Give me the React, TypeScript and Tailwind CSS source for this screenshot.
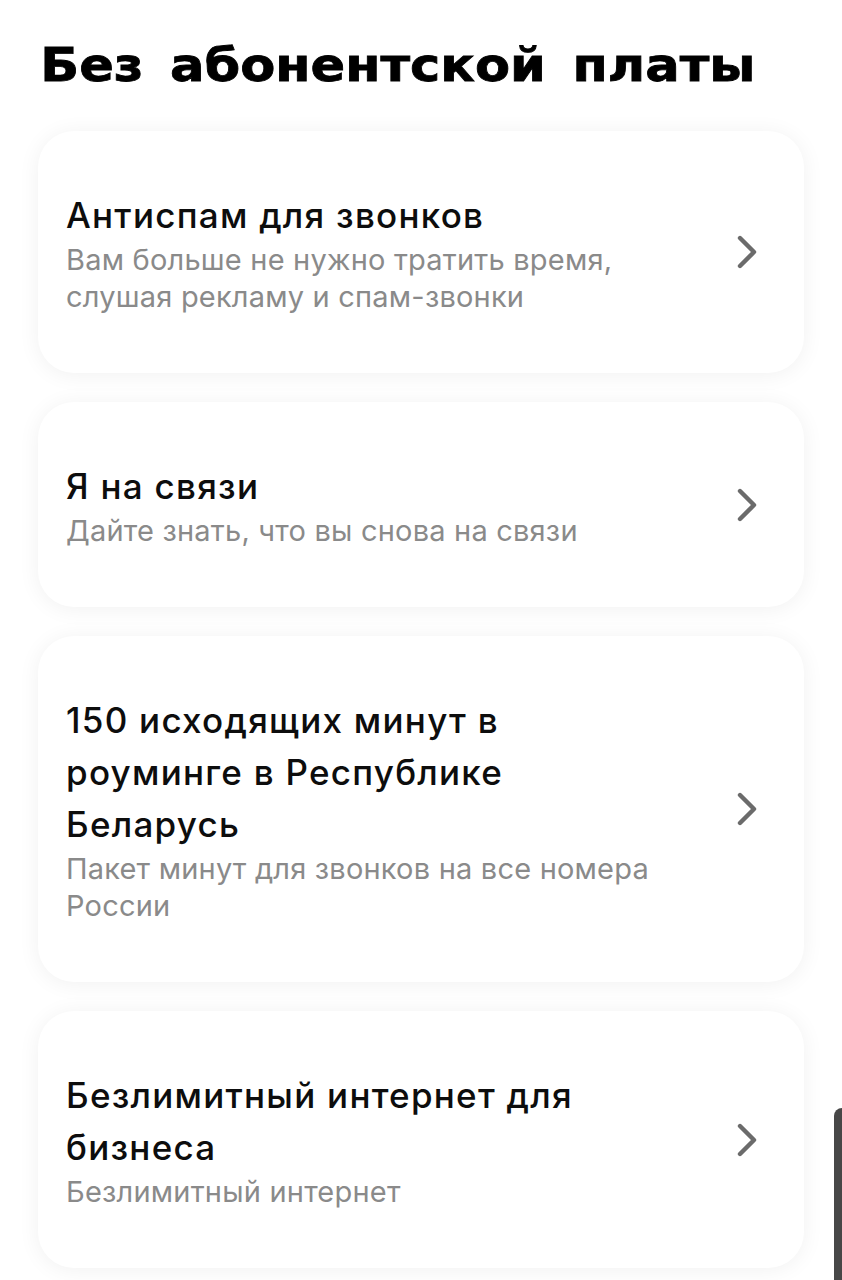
const items = [
  {
    title: 'Антиспам для звонков',
    text: 'Вам больше не нужно тратить время, слушая рекламу и спам-звонки',
  },
  {
    title: 'Я на связи',
    text: 'Дайте знать, что вы снова на связи',
  },
  {
    title: '150 исходящих минут в роуминге в Республике Беларусь',
    text: 'Пакет минут для звонков на все номера России',
  },
  {
    title: 'Безлимитный интернет для бизнеса',
    text: 'Безлимитный интернет',
  },
];

// стрелка справа
function Chevron() {
  return (
    <svg width="22" height="34" viewBox="0 0 22 34" fill="none" className="mr-[45px] shrink-0">
      <path
        d="M3 3 L17 17 L3 31"
        stroke="#6b6b6b"
        strokeWidth="4.4"
        strokeLinecap="round"
        strokeLinejoin="round"
      />
    </svg>
  );
}

export default function App() {
  return (
    <div className="relative min-h-[1280px] overflow-hidden bg-white font-['Inter','Liberation_Sans',sans-serif]">
      <div className="px-[38px] pt-[35px]">
        {/* заголовок */}
        <h1 className="origin-left scale-x-[1.11] pl-[2px] font-['DejaVu_Sans',sans-serif] text-[46px] leading-[60px] font-bold text-black [word-spacing:8px] [-webkit-text-stroke:0.8px_black]">
          Без абонентской платы
        </h1>

        {/* карточки */}
        <div className="mt-[36px] flex flex-col gap-[29px]">
          {items.map((item) => (
            <div
              key={item.title}
              className="flex items-center rounded-[36px] bg-white py-[58px] pl-[28px] shadow-[0_2px_22px_rgba(0,0,0,0.06)]"
            >
              <div className="w-[600px]">
                <p className="text-[35px] leading-[52px] font-medium tracking-[1.25px] text-[#0d0d0d]">{item.title}</p>
                <p className="text-[29px] leading-[37px] tracking-[0.2px] text-[#8a8a8a]">{item.text}</p>
              </div>
              <div className="flex-1" />
              <Chevron />
            </div>
          ))}
        </div>
      </div>

      {/* индикатор прокрутки */}
      <div className="absolute top-[1108px] right-0 h-[180px] w-[8px] rounded-tl-[8px] bg-[#474747]" />
    </div>
  );
}
